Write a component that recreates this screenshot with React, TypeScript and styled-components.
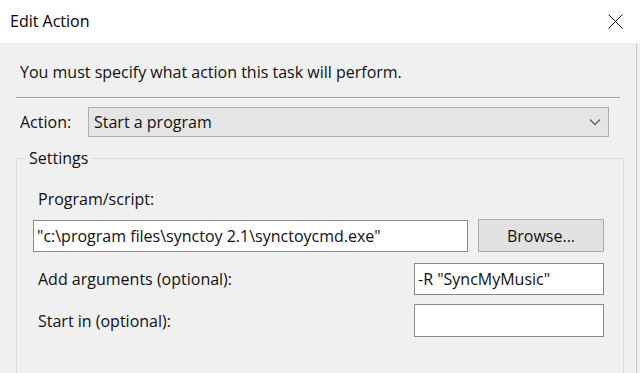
import React from "react";
import styled, { createGlobalStyle } from "styled-components";

const Global = createGlobalStyle`
  html, body { margin: 0; padding: 0; background: #f0f0f0; }
  body { font-family: "Open Sans", "Noto Sans", sans-serif; color: #111; }
  * { box-sizing: border-box; }
`;

const Window = styled.div`
  width: 640px;
  height: 373px;
  overflow: hidden;
  display: flex;
  flex-direction: column;
  background: #f0f0f0;
`;

const TitleBar = styled.div`
  height: 43px;
  flex: none;
  background: #ffffff;
  display: flex;
  align-items: center;
  justify-content: space-between;
  padding: 0 17px 0 10px;
`;

const Title = styled.div`
  font-size: 16px;
  color: #000;
  margin-top: -1px;
`;

const Body = styled.div`
  flex: 1;
  width: 637px;
  border-right: 1px solid #c3cbd6;
  padding: 0 0 0 16px;
  display: flex;
  flex-direction: column;
`;

const Instruction = styled.div`
  font-size: 16px;
  height: 54px;
  padding: 18px 0 0 4px;
  line-height: 22px;
`;

const Separator = styled.div`
  width: 604px;
  height: 2px;
  border-top: 1px solid #a0a0a0;
  border-bottom: 1px solid #fafafa;
`;

const ActionRow = styled.div`
  display: flex;
  align-items: center;
  margin-top: 8px;
  padding-left: 4px;
  height: 30px;
`;

const Label = styled.span`
  font-size: 16px;
  line-height: 22px;
`;

const ActionLabel = styled(Label)`
  width: 68px;
`;

const Combo = styled.div`
  width: 521px;
  height: 30px;
  background: #e5e5e5;
  border: 1px solid #adadad;
  display: flex;
  align-items: center;
  justify-content: space-between;
  padding: 0 7px 0 5px;
  font-size: 16px;
`;

const Group = styled.fieldset`
  margin: 10px 0 0 0;
  width: 606px;
  height: 240px;
  border: 1px solid #dadada;
  padding: 19px 19px 0 16px;
  display: flex;
  flex-direction: column;
`;

const Legend = styled.legend`
  font-size: 16px;
  padding: 0 3px;
  margin-left: -7px;
  line-height: 22px;
`;

const FieldLabel = styled(Label)`
  padding-left: 5px;
  display: block;
  margin-bottom: 9px;
`;

const ProgramRow = styled.div`
  display: flex;
  align-items: center;
  gap: 10px;
`;

const TextBox = styled.div<{ $w: number; $h?: number }>`
  width: ${(p) => p.$w}px;
  height: ${(p) => p.$h ?? 32}px;
  background: #fff;
  border: 1px solid #8a8a8a;
  font-size: 16px;
  display: flex;
  align-items: center;
  padding-left: 3px;
  white-space: nowrap;
`;

const Button = styled.div`
  width: 126px;
  height: 33px;
  background: #e1e1e1;
  border: 1px solid #adadad;
  display: flex;
  align-items: center;
  justify-content: center;
  font-size: 16px;
`;

const OptRow = styled.div<{ $gap: number }>`
  display: flex;
  align-items: center;
  justify-content: space-between;
  margin-top: ${(p) => p.$gap}px;
`;

const OptLabel = styled(Label)`
  padding-left: 5px;
`;

const CloseIcon = () => (
  <svg width="15" height="15" viewBox="0 0 15 15">
    <path d="M0.5 0.5L14.5 14.5M14.5 0.5L0.5 14.5" stroke="#111" strokeWidth="1" />
  </svg>
);

const Chevron = () => (
  <svg width="12" height="8" viewBox="0 0 12 8">
    <path d="M1 1.5L6 6.5L11 1.5" stroke="#606060" strokeWidth="1.3" fill="none" />
  </svg>
);

export default function App() {
  return (
    <>
      <Global />
      <Window>
        <TitleBar>
          <Title>Edit Action</Title>
          <CloseIcon />
        </TitleBar>
        <Body>
          <Instruction>You must specify what action this task will perform.</Instruction>
          <Separator />
          <ActionRow>
            <ActionLabel>Action:</ActionLabel>
            <Combo>
              <span>Start a program</span>
              <Chevron />
            </Combo>
          </ActionRow>
          <Group>
            <Legend>Settings</Legend>
            <FieldLabel>Program/script:</FieldLabel>
            <ProgramRow>
              <TextBox $w={435}>"c:\program files\synctoy 2.1\synctoycmd.exe"</TextBox>
              <Button>Browse...</Button>
            </ProgramRow>
            <OptRow $gap={11}>
              <OptLabel>Add arguments (optional):</OptLabel>
              <TextBox $w={190}>-R "SyncMyMusic"</TextBox>
            </OptRow>
            <OptRow $gap={9}>
              <OptLabel>Start in (optional):</OptLabel>
              <TextBox $w={190} $h={33}></TextBox>
            </OptRow>
          </Group>
        </Body>
      </Window>
    </>
  );
}
